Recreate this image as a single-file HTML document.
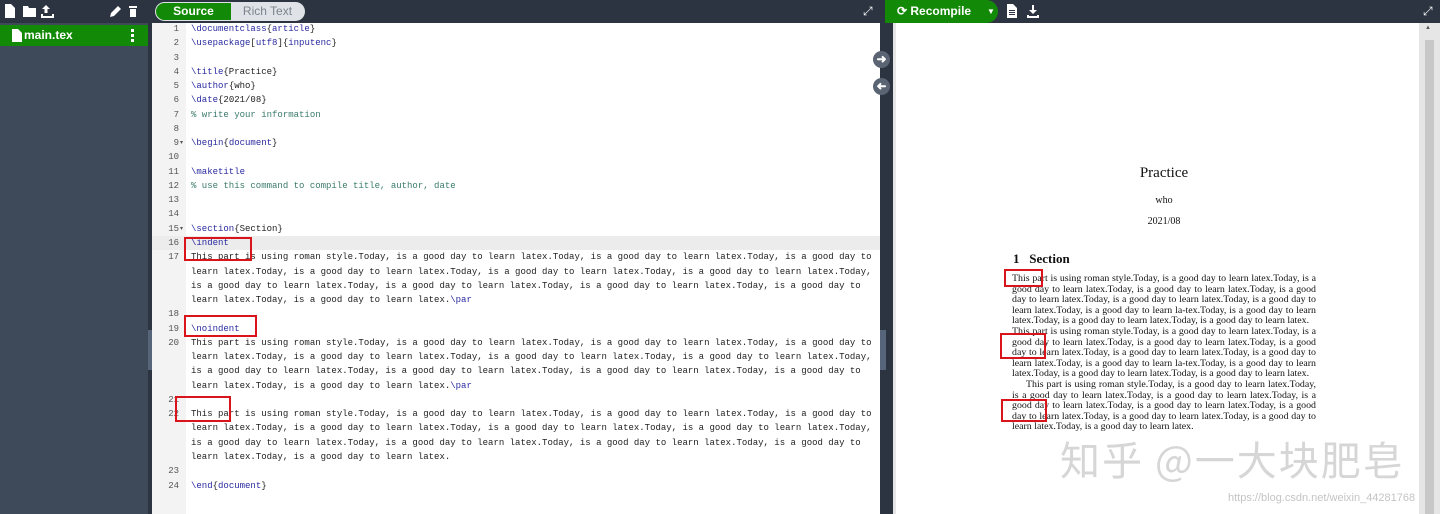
<!DOCTYPE html><html><head><meta charset="utf-8"><style>
*{margin:0;padding:0;box-sizing:border-box}
body{width:1440px;height:514px;overflow:hidden;background:#fff;font-family:"Liberation Sans",sans-serif;position:relative}
.a{position:absolute}
.top{left:0;top:0;width:1440px;height:23px;background:#2c3441}
.side{left:0;top:23px;width:148px;height:491px;background:#3e4a5a}
.mono{font-family:"Liberation Mono","DejaVu Sans Mono",monospace;font-size:9px;line-height:14.27px;color:#222;white-space:pre}
.k{color:#2a2aa0}.c{color:#3a7a6a}.b{color:#2a2aa0}
.red{border:2px solid #d9141b}
.pdf{font-family:"Liberation Serif",serif;color:#111}
.par{font-size:9.9px;line-height:10.6px;text-align:justify;width:304px}
</style></head><body>
<div class="a top"></div>
<svg class="a" style="left:4px;top:4px" width="60" height="15" viewBox="0 0 60 15" fill="#fff">
<path d="M1 0h6l4 4v10H1z"/><path d="M19 2h5l1 2h7v9H19z"/><path d="M42 1l4 4h-2.5v4h-3v-4H38zM37 10h2v2h9v-2h2v4H37z"/>
</svg>
<svg class="a" style="left:108px;top:4px" width="32" height="15" viewBox="0 0 32 15" fill="#fff">
<path d="M2 13l1-4 7-7 3 3-7 7z"/><path d="M21 2h8v2h-8zM22 5h6v8h-6z"/>
</svg>
<div class="a" style="left:155px;top:2px;width:150px;height:19px;border-radius:10px;background:#dfe3e8"></div>
<div class="a" style="left:156px;top:3px;width:75px;height:17px;border-radius:9px 0 0 9px;background:#138a07;color:#fff;font-weight:bold;font-size:12px;line-height:17px;text-align:center">Source</div>
<div class="a" style="left:231px;top:3px;width:73px;height:17px;color:#7a838e;font-size:12px;line-height:17px;text-align:center">Rich Text</div>
<div class="a" style="left:863px;top:4px;color:#fff;font-size:12px">⤢</div>
<div class="a" style="left:885px;top:0;width:113px;height:23px;background:#138a07;border-radius:0 12px 12px 0"></div>
<div class="a" style="left:897px;top:3px;color:#fff;font-weight:bold;font-size:12px;line-height:17px">⟳ Recompile</div>
<div class="a" style="left:987px;top:3px;color:#fff;font-size:8px;line-height:17px">▼</div>
<svg class="a" style="left:1006px;top:4px" width="34" height="15" viewBox="0 0 34 15" fill="#fff"><path d="M1 0h6l4 4v10H1zM3 6h6v1H3zM3 8h6v1H3zM3 10h6v1H3z" fill-rule="evenodd"/><path d="M26 1h2v5h3l-4 4-4-4h3zM21 11h2v1h8v-1h2v3H21z"/></svg>
<div class="a" style="left:1423px;top:4px;color:#fff;font-size:12px">⤢</div>
<div class="a side"></div>
<div class="a" style="left:0;top:25px;width:148px;height:21px;background:#138a07"></div>
<svg class="a" style="left:12px;top:29px" width="10" height="13" fill="#fff"><path d="M0 0h6l4 4v9H0z"/></svg>
<div class="a" style="left:24px;top:25px;color:#fff;font-weight:bold;font-size:12px;line-height:21px">main.tex</div>
<div class="a" style="left:131px;top:29px;width:3px;height:13px;background:linear-gradient(#fff 0 3px,transparent 3px 5px,#fff 5px 8px,transparent 8px 10px,#fff 10px)"></div>
<div class="a" style="left:148px;top:23px;width:4px;height:491px;background:#2c3441"></div>
<div class="a" style="left:148px;top:330px;width:4px;height:40px;background:#56657a"></div>
<div class="a" style="left:152px;top:23px;width:728px;height:491px;background:#fff"></div>
<div class="a" style="left:152px;top:23px;width:34px;height:491px;background:#f3f3f3"></div>
<div class="a" style="left:152px;top:236px;width:728px;height:14px;background:#ececec"></div>
<div class="a mono" style="left:152px;top:22px;width:27px;text-align:right;color:#555">1
2
3
4
5
6
7
8
9
10
11
12
13
14
15
16
17



18
19
20



21
22



23
24</div>
<div class="a mono" style="left:191px;top:22px"><span class="k">\documentclass</span>{<span class="b">article</span>}
<span class="k">\usepackage</span>[<span class="b">utf8</span>]{<span class="b">inputenc</span>}

<span class="k">\title</span>{Practice}
<span class="k">\author</span>{who}
<span class="k">\date</span>{2021/08}
<span class="c">% write your information</span>

<span class="k">\begin</span>{<span class="b">document</span>}

<span class="k">\maketitle</span>
<span class="c">% use this command to compile title, author, date</span>


<span class="k">\section</span>{Section}
<span class="k">\indent</span>
This part is using roman style.Today, is a good day to learn latex.Today, is a good day to learn latex.Today, is a good day to
learn latex.Today, is a good day to learn latex.Today, is a good day to learn latex.Today, is a good day to learn latex.Today,
is a good day to learn latex.Today, is a good day to learn latex.Today, is a good day to learn latex.Today, is a good day to
learn latex.Today, is a good day to learn latex.<span class="k">\par</span>

<span class="k">\noindent</span>
This part is using roman style.Today, is a good day to learn latex.Today, is a good day to learn latex.Today, is a good day to
learn latex.Today, is a good day to learn latex.Today, is a good day to learn latex.Today, is a good day to learn latex.Today,
is a good day to learn latex.Today, is a good day to learn latex.Today, is a good day to learn latex.Today, is a good day to
learn latex.Today, is a good day to learn latex.<span class="k">\par</span>

This part is using roman style.Today, is a good day to learn latex.Today, is a good day to learn latex.Today, is a good day to
learn latex.Today, is a good day to learn latex.Today, is a good day to learn latex.Today, is a good day to learn latex.Today,
is a good day to learn latex.Today, is a good day to learn latex.Today, is a good day to learn latex.Today, is a good day to
learn latex.Today, is a good day to learn latex.

<span class="k">\end</span>{<span class="b">document</span>}</div>
<div class="a" style="left:180px;top:139px;font-size:6px;color:#555">▾</div>
<div class="a" style="left:180px;top:225px;font-size:6px;color:#555">▾</div>
<div class="a red" style="left:184px;top:237px;width:68px;height:24px"></div>
<div class="a red" style="left:184px;top:315px;width:73px;height:22px"></div>
<div class="a red" style="left:175px;top:396px;width:56px;height:26px"></div>
<div class="a" style="left:880px;top:23px;width:13px;height:491px;background:#2c3441"></div>
<div class="a" style="left:880px;top:330px;width:6px;height:40px;background:#56657a"></div>
<div class="a" style="left:873px;top:51px;width:17px;height:17px;border-radius:50%;background:#5a6472;color:#fff;font-size:12px;line-height:17px;text-align:center;font-weight:bold">➜</div>
<div class="a" style="left:873px;top:78px;width:17px;height:17px;border-radius:50%;background:#5a6472;color:#fff;font-size:12px;line-height:17px;text-align:center;font-weight:bold;transform:scaleX(-1)">➜</div>
<div class="a" style="left:893px;top:23px;width:547px;height:491px;background:#e6e6e6"></div>
<div class="a" style="left:896px;top:23px;width:523px;height:491px;background:#fff"></div>
<div class="a" style="left:1425px;top:40px;width:9px;height:474px;background:#c8c8c8"></div>
<div class="a" style="left:1425px;top:25px;font-size:6px;color:#555">▲</div>
<div class="a pdf" style="left:1012px;top:165px;width:304px;text-align:center;font-size:15px">Practice</div>
<div class="a pdf" style="left:1012px;top:195px;width:304px;text-align:center;font-size:10px">who</div>
<div class="a pdf" style="left:1012px;top:216px;width:304px;text-align:center;font-size:10px">2021/08</div>
<div class="a pdf" style="left:1013px;top:251px;font-size:13px;font-weight:bold">1&nbsp;&nbsp;&nbsp;Section</div>
<div class="a pdf par" style="left:1012px;top:274px">This part is using roman style.Today, is a good day to learn latex.Today, is a good day to learn latex.Today, is a good day to learn latex.Today, is a good day to learn latex.Today, is a good day to learn latex.Today, is a good day to learn latex.Today, is a good day to learn la-tex.Today, is a good day to learn latex.Today, is a good day to learn latex.Today, is a good day to learn latex.<br>This part is using roman style.Today, is a good day to learn latex.Today, is a good day to learn latex.Today, is a good day to learn latex.Today, is a good day to learn latex.Today, is a good day to learn latex.Today, is a good day to learn latex.Today, is a good day to learn la-tex.Today, is a good day to learn latex.Today, is a good day to learn latex.Today, is a good day to learn latex.<br><span style="padding-left:14px"></span>This part is using roman style.Today, is a good day to learn latex.Today, is a good day to learn latex.Today, is a good day to learn latex.Today, is a good day to learn latex.Today, is a good day to learn latex.Today, is a good day to learn latex.Today, is a good day to learn latex.Today, is a good day to learn latex.Today, is a good day to learn latex.</div>
<div class="a red" style="left:1004px;top:269px;width:39px;height:18px"></div>
<div class="a red" style="left:1000px;top:333px;width:46px;height:26px"></div>
<div class="a red" style="left:1001px;top:399px;width:46px;height:23px"></div>
<div class="a" style="left:1060px;top:436px;font-family:'Noto Sans CJK SC',sans-serif;font-size:40px;line-height:44px;color:rgba(200,200,200,0.75);letter-spacing:2px">知乎 @一大块肥皂</div>
<div class="a" style="left:1228px;top:492px;font-size:11px;color:rgba(190,190,190,0.9)">https://blog.csdn.net/weixin_44281768</div>
</body></html>
